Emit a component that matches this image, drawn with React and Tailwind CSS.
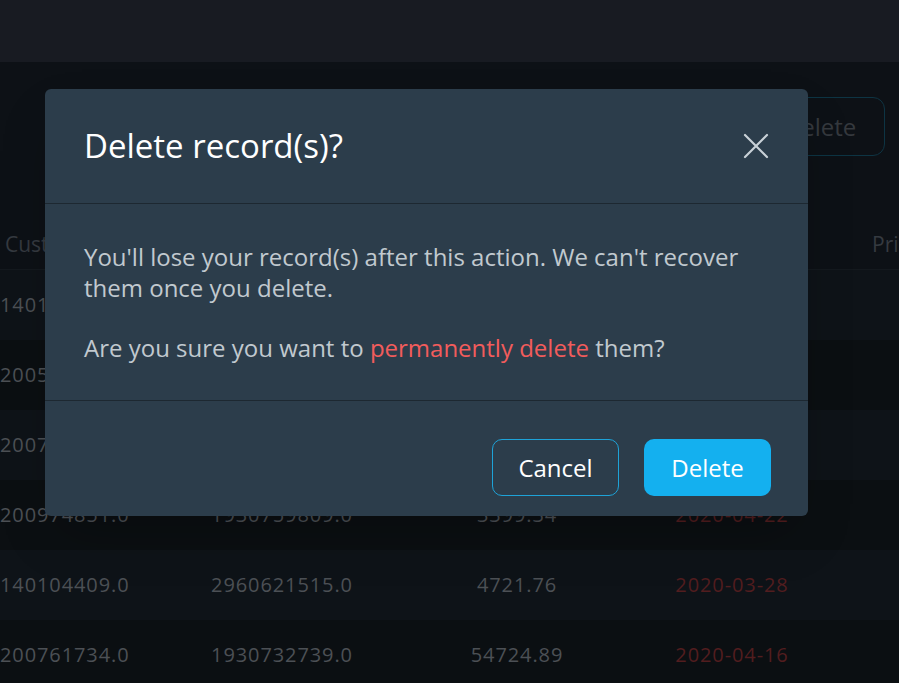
const rows = [
  { bg: 'bg-[#0e1318]', a: '140104409.0', b: '2960621515.0', c: '4721.76', d: '2020-03-28' },
  { bg: 'bg-[#0b0f12]', a: '200503214.0', b: '1930714288.0', c: '1203.55', d: '2020-04-02' },
  { bg: 'bg-[#0e1318]', a: '200744863.0', b: '1930725901.0', c: '8812.40', d: '2020-04-10' },
  { bg: 'bg-[#0b0f12]', a: '200974851.0', b: '1930759809.0', c: '3399.34', d: '2020-04-22' },
  { bg: 'bg-[#0e1318]', a: '140104409.0', b: '2960621515.0', c: '4721.76', d: '2020-03-28' },
  { bg: 'bg-[#0b0f12]', a: '200761734.0', b: '1930732739.0', c: '54724.89', d: '2020-04-16' },
]

function CloseIcon() {
  return (
    <svg width="26" height="26" viewBox="0 0 26 26" fill="none" stroke="#c9d1d7" strokeWidth="2.2" strokeLinecap="round">
      <path d="M2 2 L24 24 M24 2 L2 24" />
    </svg>
  )
}

function DeleteModal() {
  return (
    <div className="absolute left-[45px] top-[89px] w-[763px] rounded-md bg-[#2c3d4b] shadow-2xl">
      <div className="flex h-[115px] items-center justify-between border-b border-[#1d2831] px-[39px]">
        <h2 className="text-[33px] font-medium text-white">Delete record(s)?</h2>
        <button className="flex h-[26px] w-[26px] items-center justify-center">
          <CloseIcon />
        </button>
      </div>
      <div className="border-b border-[#1d2831] px-[39px] pb-[37px] pt-[37px] text-[24px] leading-[31px] text-[#c1c9cf]">
        <p className="max-w-[670px]">
          You'll lose your record(s) after this action. We can't recover them once you delete.
        </p>
        <p className="mt-[29px]">
          Are you sure you want to <span className="text-[#f25c5c]">permanently delete</span> them?
        </p>
      </div>
      <div className="flex justify-end gap-[25px] pb-[20px] pr-[37px] pt-[38px]">
        <button className="h-[57px] w-[127px] rounded-[10px] border border-[#1ea3d8] text-[24px] text-white">
          Cancel
        </button>
        <button className="h-[57px] w-[127px] rounded-[10px] bg-[#14b0ef] text-[24px] font-medium text-white">
          Delete
        </button>
      </div>
    </div>
  )
}

export default function App() {
  return (
    <div className="relative h-[683px] w-[899px] overflow-hidden bg-[#0d1116] font-['Open_Sans',sans-serif]">
      <div className="h-[62px] bg-[#181b22]" />
      <div className="flex h-[158px] items-start justify-end pr-[14px] pt-[35px]">
        <div className="flex h-[59px] w-[130px] items-center justify-center rounded-[12px] border border-[#0d3443] text-[24px] text-[#35393e]">
          Delete
        </div>
      </div>
      <div className="flex h-[50px] items-center whitespace-nowrap border-b border-[#14191e] text-[21px] text-[#353a40]">
        <div className="w-[130px] shrink-0 pl-[5px]">Customer</div>
        <div className="w-[742px] shrink-0" />
        <div className="shrink-0">Price</div>
      </div>
      {rows.map((r, i) => (
        <div key={i} className={`flex h-[70px] items-center whitespace-nowrap text-[20px] tracking-[0.9px] ${r.bg}`}>
          <div className="w-[130px] shrink-0 text-[#4c5055]">{r.a}</div>
          <div className="w-[304px] shrink-0 text-center text-[#4c5055]">{r.b}</div>
          <div className="w-[166px] shrink-0 text-center text-[#4c5055]">{r.c}</div>
          <div className="w-[264px] shrink-0 text-center text-[#521d1f]">{r.d}</div>
        </div>
      ))}
      <DeleteModal />
    </div>
  )
}
